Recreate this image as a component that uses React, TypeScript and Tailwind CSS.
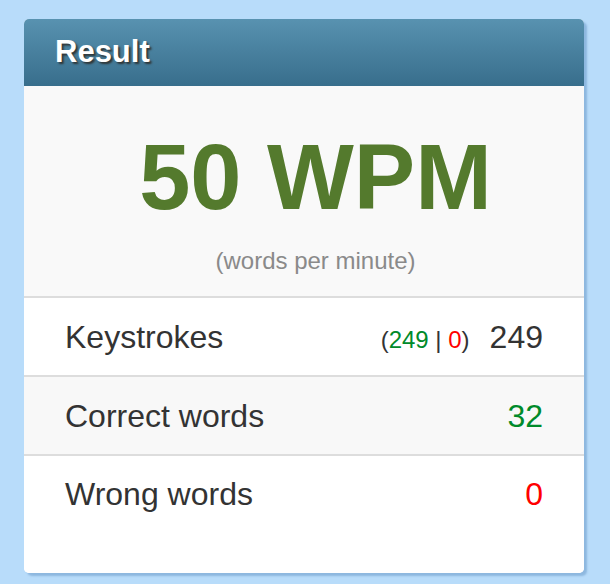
// Typing test result card: WPM headline plus keystroke / word counts.

const font = { fontFamily: '"Liberation Sans", Arial, sans-serif' }

export default function App() {
  return (
    <div className="min-h-[584px] w-full bg-[#b8dcfa] pt-[19px] pl-[24px]" style={font}>
      <div className="w-[560px] overflow-hidden rounded-[5px] bg-white shadow-[3px_3px_2px_rgba(90,140,190,0.45)]">
        <div className="flex h-[67px] items-center bg-gradient-to-b from-[#5892b0] to-[#386e8c] pl-[31px]">
          <h1 className="text-[31px] font-bold text-white [text-shadow:2px_2px_2px_rgba(40,30,20,0.75)]">
            Result
          </h1>
        </div>

        <div className="flex h-[210px] flex-col items-center bg-[#f9f9f9] pt-[45px] pl-[23px]">
          <p className="text-[92px] leading-none font-bold text-[#547a2d]">50 WPM</p>
          <p className="mt-[26px] text-[24px] leading-none text-[#8a8a8a]">(words per minute)</p>
        </div>

        <Row label="Keystrokes" className="bg-white">
          <span className="mr-[20px] text-[24px] text-[#333]">
            (<span className="text-[#008a2a]">249</span> | <span className="text-[#ff0000]">0</span>)
          </span>
          <span className="text-[#333]">249</span>
        </Row>
        <Row label="Correct words" className="bg-[#f8f8f8]">
          <span className="text-[#008a2a]">32</span>
        </Row>
        <Row label="Wrong words" className="bg-white" last>
          <span className="text-[#ff0000]">0</span>
        </Row>
      </div>
    </div>
  )
}

function Row({
  label,
  className,
  last,
  children,
}: {
  label: string
  className: string
  last?: boolean
  children: React.ReactNode
}) {
  return (
    <div className={`border-t-2 border-[#dddddd] ${className} ${last ? 'h-[119px] pt-[20px]' : 'h-[79px] items-center'} flex justify-between px-[41px]`}>
      <span className={`text-[32px] text-[#333] ${last ? 'leading-[37px]' : ''}`}>{label}</span>
      <span className={`flex items-baseline text-[32px] ${last ? 'leading-[37px]' : ''}`}>{children}</span>
    </div>
  )
}
